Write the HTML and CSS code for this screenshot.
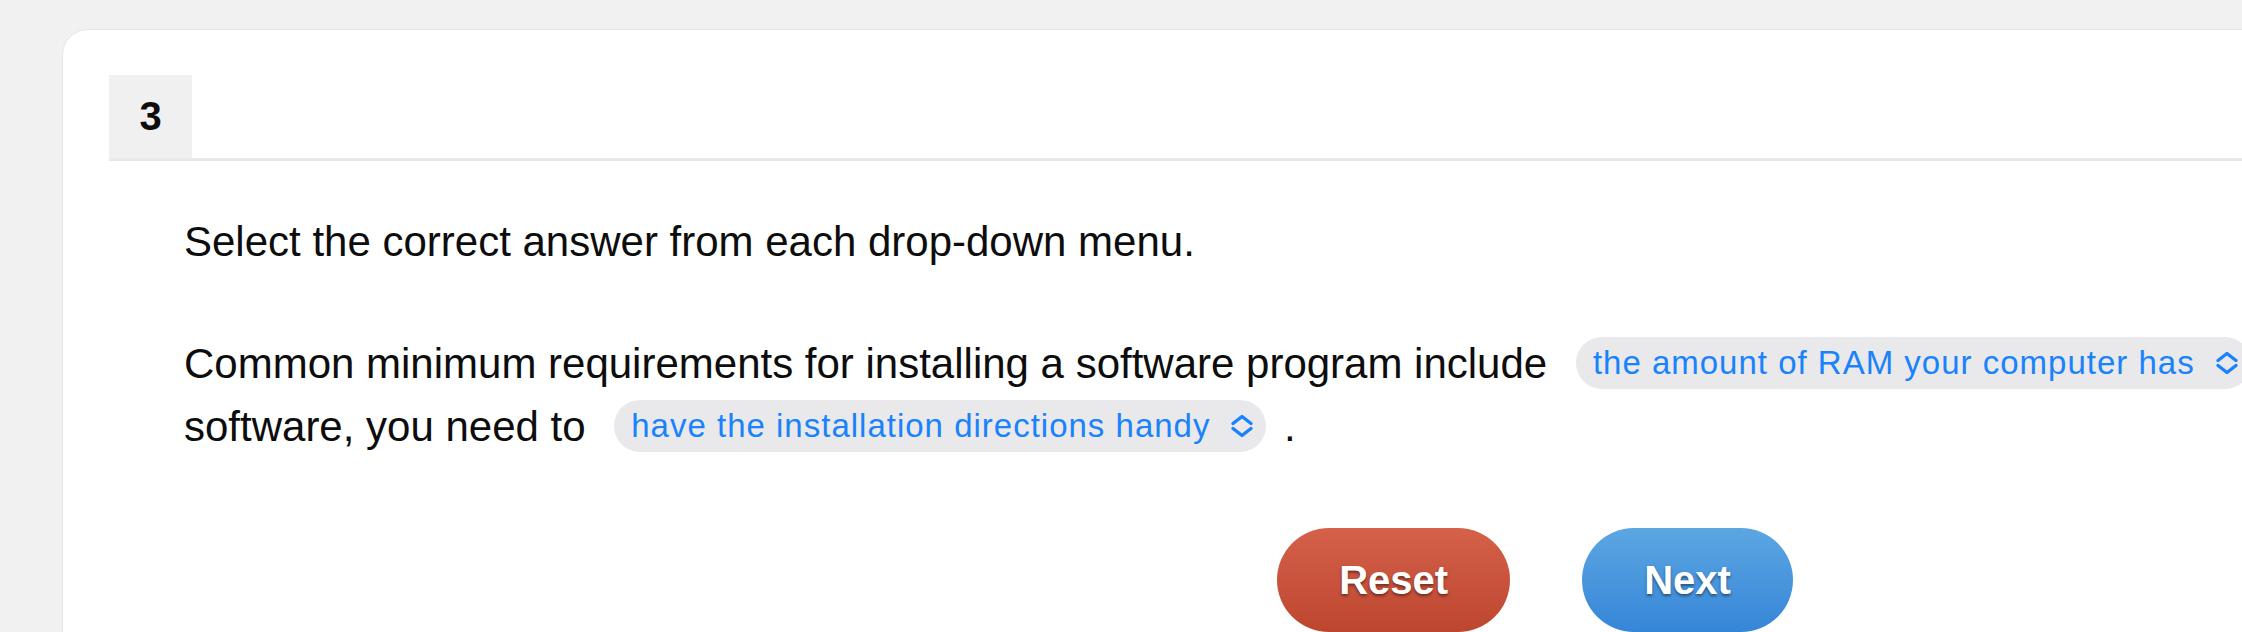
FILE: index.html
```html
<!DOCTYPE html>
<html lang="en">
<head>
  <meta charset="UTF-8" />
  <meta name="viewport" content="width=device-width, initial-scale=1.0"/>
  <title>Question 3</title>
  <link rel="stylesheet" href="styles.css">
</head>
<body>
  <div class="question-card">
    <div class="question-header">
      <div class="question-number">3</div>
    </div>
    <div class="question-body">
      <p class="instructions">Select the correct answer from each drop-down menu.</p>
      <p class="prompt">
        Common minimum requirements for installing a software program include
        <span class="dropdown">the amount of RAM your computer has
          <svg class="chevrons" viewBox="0 0 24 24"><path d="M3 9.5 L12 2.5 L21 9.5 M3 14.5 L12 21.5 L21 14.5"/></svg>
        </span> . Before installing any<br>
        software, you need to
        <span class="dropdown">have the installation directions handy
          <svg class="chevrons" viewBox="0 0 24 24"><path d="M3 9.5 L12 2.5 L21 9.5 M3 14.5 L12 21.5 L21 14.5"/></svg>
        </span> .
      </p>
    </div>
    <div class="question-actions">
      <button class="btn btn-reset">Reset</button>
      <button class="btn btn-next">Next</button>
    </div>
  </div>
</body>
</html>
```

FILE: styles.css
```css
html, body {
  overflow: hidden;
}

body {
  margin: 0;
  padding: 29px 0 0 62px;
  background-color: #f1f1f1;
  font-family: "Liberation Sans", Arial, sans-serif;
  color: #0d0d0d;
}

.question-card {
  box-sizing: border-box;
  width: 2946px;
  min-height: 700px;
  padding: 45px 46px 0 46px;
  background-color: #fff;
  border: 1px solid #e6e6e6;
  border-radius: 26px;
}

.question-header {
  display: flex;
  border-bottom: 3px solid #e8e8e8;
}

.question-number {
  width: 83px;
  height: 83px;
  display: flex;
  justify-content: center;
  align-items: center;
  background-color: #f0f0f0;
  font-size: 40px;
  font-weight: bold;
}

.question-body {
  padding: 0 0 0 75px;
}

.instructions {
  margin: 51px 0 0 0;
  font-size: 42px;
  line-height: 60px;
}

.prompt {
  margin: 60px 0 0 0;
  font-size: 42px;
  line-height: 63px;
}

.dropdown {
  display: inline-flex;
  align-items: center;
  gap: 20px;
  height: 52px;
  margin: 0 6px 0 17px;
  padding: 0 12px 0 17px;
  vertical-align: middle;
  position: relative;
  top: -4px;
  background-color: #e9e9eb;
  border-radius: 26px;
  color: #1a82fb;
  font-size: 33px;
  letter-spacing: 1px;
  line-height: 52px;
}

.chevrons {
  flex: none;
  width: 24px;
  height: 24px;
  fill: none;
  stroke: #1a82fb;
  stroke-width: 3.4;
  stroke-linecap: round;
  stroke-linejoin: round;
}

.question-actions {
  display: flex;
  justify-content: center;
  gap: 72px;
  margin-top: 70px;
}

.btn {
  height: 104px;
  padding: 0 62px;
  border: none;
  border-radius: 52px;
  color: #fff;
  font-family: "Liberation Sans", Arial, sans-serif;
  font-size: 40px;
  font-weight: bold;
  text-shadow: 0 2px 3px rgba(0, 0, 0, 0.45);
  cursor: pointer;
}

.btn-reset {
  background: linear-gradient(#d5614b, #bd462e);
}

.btn-next {
  background: linear-gradient(#5ca6e2, #3686d8);
}
```
